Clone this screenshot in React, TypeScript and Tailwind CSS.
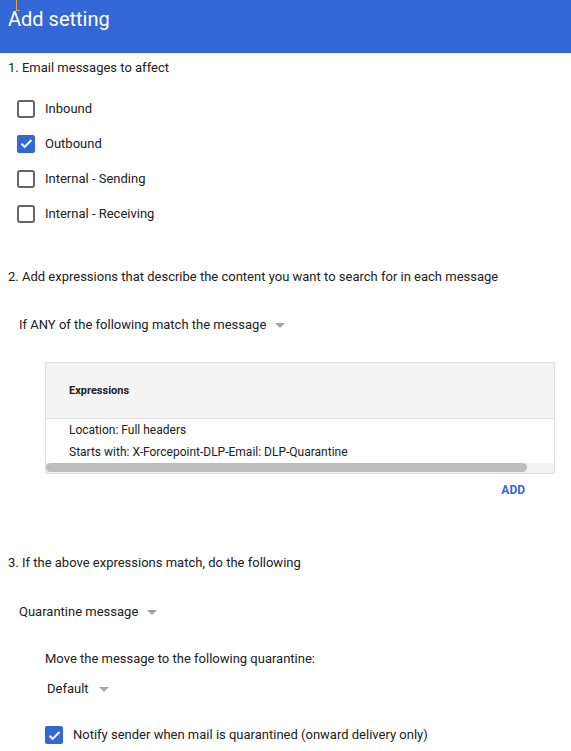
import React from "react";

type Opt = { label: string; checked: boolean };

function Checkbox({ checked }: { checked: boolean }) {
  if (checked) {
    return (
      <span className="w-[18px] h-[18px] rounded-[2px] bg-[#3367d6] flex items-center justify-center flex-none">
        <svg width="15" height="15" viewBox="0 0 24 24">
          <path d="M4 12.5l5 5L20 6.5" fill="none" stroke="#fff" strokeWidth="3.2" />
        </svg>
      </span>
    );
  }
  return <span className="w-[18px] h-[18px] rounded-[3px] border-2 border-[#666666] bg-white flex-none"></span>;
}

function Caret() {
  return (
    <svg width="10" height="5" viewBox="0 0 10 5" className="flex-none">
      <path d="M0 0h10L5 5z" fill="#a3a3a3" />
    </svg>
  );
}

export default function App() {
  const options: Opt[] = [
    { label: "Inbound", checked: false },
    { label: "Outbound", checked: true },
    { label: "Internal - Sending", checked: false },
    { label: "Internal - Receiving", checked: false },
  ];

  return (
    <div className="w-[571px] h-[751px] overflow-hidden bg-white text-[13px] text-[#212121] font-['Roboto',sans-serif]">
      {/* header */}
      <div className="relative h-[53px] bg-[#3367d6] px-[8px] pt-[7px]">
        <span className="absolute left-[16px] top-0 w-[1px] h-[11px] bg-[#e8a33d]"></span>
        <span className="absolute left-[16px] top-[10px] w-[4px] h-[1px] bg-[#e8a33d]"></span>
        <h1 className="text-[20px] leading-[24px] text-white">Add setting</h1>
      </div>

      {/* section 1 */}
      <div className="px-[8px] mt-[5px] leading-[20px]">1. Email messages to affect</div>
      <div className="mt-[13px] pl-[17px] flex flex-col">
        {options.map((o) => (
          <label key={o.label} className="h-[35px] flex items-center gap-[10px]">
            <Checkbox checked={o.checked} />
            <span>{o.label}</span>
          </label>
        ))}
      </div>

      {/* section 2 */}
      <div className="px-[8px] mt-[36px] leading-[20px]">
        2. Add expressions that describe the content you want to search for in each message
      </div>
      <div className="mt-[28px] pl-[19px] flex items-center gap-[9px] leading-[20px]">
        <span>If ANY of the following match the message</span>
        <Caret />
      </div>

      <div className="ml-[45px] w-[510px] mt-[27px] border border-[#e0e0e0] text-[12px]">
        <div className="h-[56px] bg-[#f4f4f4] border-b border-[#e0e0e0] flex items-center pl-[23px] pt-[1px]">
          <span className="font-bold text-[11px]">Expressions</span>
        </div>
        <div className="pl-[23px] leading-[22px]">
          <div>Location: Full headers</div>
          <div>Starts with: X-Forcepoint-DLP-Email: DLP-Quarantine</div>
        </div>
        <div className="h-[10px] bg-[#f1f1f1] flex items-start">
          <div className="w-[481px] h-[9px] rounded-full bg-[#bdbdbd]"></div>
        </div>
      </div>
      <div className="w-[525px] mt-[8px] flex justify-end leading-[16px]">
        <span className="text-[12px] font-bold text-[#3367d6]">ADD</span>
      </div>

      {/* section 3 */}
      <div className="px-[8px] mt-[55px] leading-[20px]">3. If the above expressions match, do the following</div>
      <div className="mt-[29px] pl-[19px] flex items-center gap-[9px] leading-[20px]">
        <span>Quarantine message</span>
        <Caret />
      </div>
      <div className="mt-[27px] pl-[45px] leading-[20px]">Move the message to the following quarantine:</div>
      <div className="mt-[10px] pl-[47px] flex items-center gap-[10px] leading-[20px]">
        <span>Default</span>
        <Caret />
      </div>
      <label className="mt-[18px] pl-[45px] h-[36px] flex items-center gap-[10px]">
        <Checkbox checked />
        <span>Notify sender when mail is quarantined (onward delivery only)</span>
      </label>
    </div>
  );
}
